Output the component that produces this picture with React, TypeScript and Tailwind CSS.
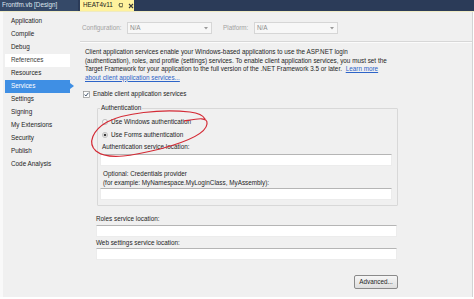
import React from 'react';

const navItems = [
  'Application',
  'Compile',
  'Debug',
  'References',
  'Resources',
  'Services',
  'Settings',
  'Signing',
  'My Extensions',
  'Security',
  'Publish',
  'Code Analysis',
];

function PinIcon() {
  return (
    <svg width="6" height="5" viewBox="0 0 6 5" className="ml-[5px]">
      <rect x="1.5" y="0.5" width="3" height="3" fill="none" stroke="#6b6a4a" strokeWidth="0.8" />
      <line x1="0" y1="2" x2="1.5" y2="2" stroke="#6b6a4a" strokeWidth="0.8" />
      <line x1="1.5" y1="4" x2="4.5" y2="4" stroke="#6b6a4a" strokeWidth="0.8" />
    </svg>
  );
}

function CloseIcon() {
  return (
    <svg width="6" height="6" viewBox="0 0 6 6" className="ml-[4px]">
      <path d="M1 1 L5 5 M5 1 L1 5" stroke="#3b3b3b" strokeWidth="1.1" />
    </svg>
  );
}

function Dropdown({ width }: { width: string }) {
  return (
    <div
      className={`${width} h-[12px] border border-[#d6d6d6] bg-[#f7f7f7] flex items-center justify-between pl-[2px] pr-[3px] text-[#8c8c8c]`}
    >
      <span>N/A</span>
      <svg width="4" height="3" viewBox="0 0 4 3">
        <path d="M0 0 L4 0 L2 2.5 Z" fill="#9a9a9a" />
      </svg>
    </div>
  );
}

function TextBox({ width }: { width: string }) {
  return <div className={`${width} h-[12px] bg-white border border-[#ececec] border-t-[#b5b5b5]`} />;
}

function Radio({ checked }: { checked?: boolean }) {
  return (
    <svg width="6" height="6" viewBox="0 0 6 6" className="mr-[3px]">
      <circle cx="3" cy="3" r="2.6" fill="#f4f4f4" stroke="#a3a3a3" strokeWidth="0.6" />
      {checked && <circle cx="3" cy="3" r="1.3" fill="#3a3a3a" />}
    </svg>
  );
}

export default function App() {
  return (
    <div
      className="w-[474px] h-[299px] overflow-hidden bg-[#f0f0f0] flex flex-col relative text-[6.35px] leading-[8.5px] text-[#1e1e1e]"
      style={{ fontFamily: '"Liberation Sans", Arial, sans-serif' }}
    >
      {/* Document tabs */}
      <div className="h-[11px] bg-[#2b3b58] flex items-stretch shrink-0">
        <div className="w-[78px] bg-[#354968] text-[#dfe5ee] flex items-center pl-[2px]">Frontfm.vb [Design]</div>
        <div className="w-[54px] ml-[2px] bg-[#fff29d] text-[#1b1b1b] flex items-center pl-[3px]">
          HEAT4v11
          <PinIcon />
          <CloseIcon />
        </div>
      </div>
      <div className="h-[1px] bg-[#eeeac4] shrink-0" />

      <div className="flex flex-1 min-h-0">
        {/* Left navigation */}
        <nav className="w-[78px] border-l-[3px] border-[#f9f9f9] pt-[3px] flex flex-col shrink-0">
          {navItems.map((item) => {
            const selected = item === 'Services';
            const hover = item === 'References';
            return (
              <div
                key={item}
                className={`relative h-[13px] ml-[2px] w-[65px] pl-[6px] flex items-center ${
                  selected ? 'bg-[#3f8fe4] text-white' : hover ? 'bg-white text-[#3c3c3c]' : ''
                }`}
              >
                {item}
                {selected && (
                  <span className="absolute right-[-4px] top-[3px] w-0 h-0 border-y-[3.5px] border-y-transparent border-l-[4px] border-l-[#3f8fe4]" />
                )}
              </div>
            );
          })}
        </nav>

        {/* Services page */}
        <main className="flex-1 flex flex-col min-w-0">
          <div className="h-[29px] pt-[3px] pl-[4px] flex items-center shrink-0">
            <span className="w-[45px] text-[#a3a3a3]">Configuration:</span>
            <Dropdown width="w-[85px]" />
            <span className="w-[31px] ml-[11px] text-[#a3a3a3]">Platform:</span>
            <Dropdown width="w-[84px]" />
          </div>
          <div className="ml-[2px] h-[2px] border-t border-[#d7d7d7] bg-white/70 shrink-0" />

          <div className="pl-[7px] pt-[5px]">
            <p>Client application services enable your Windows-based applications to use the ASP.NET login</p>
            <p>(authentication), roles, and profile (settings) services. To enable client application services, you must set the</p>
            <p>
              Target Framework for your application to the full version of the .NET Framework 3.5 or later.{' '}
              <span className="ml-[2px] text-[#2d64c8] underline">Learn more</span>
            </p>
            <p className="text-[#2d64c8] underline">about client application services...</p>
          </div>

          <div className="ml-[5px] mt-[8px] h-[9px] flex items-center">
            <svg width="7" height="7" viewBox="0 0 7 7" className="mr-[3px]">
              <rect x="0.5" y="0.5" width="6" height="6" fill="#fdfdfd" stroke="#8e8f8f" strokeWidth="0.7" />
              <path d="M1.6 3.6 L2.9 5 L5.4 1.8" fill="none" stroke="#2a3f5c" strokeWidth="0.9" />
            </svg>
            Enable client application services
          </div>

          <div className="ml-[18px] w-[302px] flex flex-col">
            <fieldset className="ml-[1px] w-[301px] border border-[#d8d8d8] rounded-[1px] pb-[5px] mt-[5px]">
              <legend className="ml-[2px] px-[1px]">Authentication</legend>
              <div className="mt-[3px] h-[13px] pl-[4px] flex items-center">
                <Radio />
                Use Windows authentication
              </div>
              <div className="h-[13px] pl-[4px] flex items-center">
                <Radio checked />
                Use Forms authentication
              </div>
              <div className="h-[12px] pl-[4px] flex items-center">Authentication service location:</div>
              <div className="ml-[2px]">
                <TextBox width="w-[292px]" />
              </div>
              <p className="mt-[4.5px] pl-[5px]">Optional: Credentials provider</p>
              <p className="pl-[5px]">(for example: MyNamespace.MyLoginClass, MyAssembly):</p>
              <div className="ml-[2px] mt-[0.5px]">
                <TextBox width="w-[292px]" />
              </div>
            </fieldset>

            <p className="mt-[9.5px]">Roles service location:</p>
            <div className="mt-[1px]">
              <TextBox width="w-[301px]" />
            </div>
            <p className="mt-[2px]">Web settings service location:</p>
            <div className="mt-[1px]">
              <TextBox width="w-[301px]" />
            </div>
            <div className="mt-[15px] flex justify-end">
              <button className="w-[44px] h-[14px] border border-[#8a8a8a] rounded-[2px] bg-gradient-to-b from-[#f6f6f6] to-[#dedede] text-[6.35px] text-[#1e1e1e] flex items-center justify-center">
                Advanced...
              </button>
            </div>
          </div>
        </main>
        <div className="w-[1px] bg-[#d3d3d3] shrink-0" />
        <div className="w-[1px] bg-white shrink-0" />
      </div>
      <div className="h-[2px] bg-white shrink-0" />

      {/* Red hand-drawn annotation */}
      <svg className="absolute left-0 top-0 pointer-events-none" width="474" height="299" viewBox="0 0 474 299">
        <path
          d="M184 121 C196 119 208 116 207 124 C206 133 190 141 160 149 C135 155 108 161 96 151 C87 143 93 130 107 122 C124 113 160 109 190 112 C198 113 203 115 205 119"
          fill="none"
          stroke="#d42a35"
          strokeWidth="1.2"
          strokeLinecap="round"
        />
      </svg>
    </div>
  );
}
